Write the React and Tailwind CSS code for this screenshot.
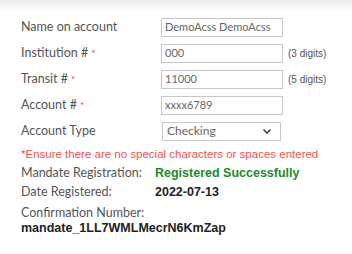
import React from 'react';

const lato = { fontFamily: 'Lato, "Open Sans", sans-serif' };

function Field({ label, required, value, hint }) {
  return (
    <div className="flex h-[26px] items-center">
      <div className="w-[140px] text-[12.5px] text-[#555]" style={lato}>
        {label}
        {required && <span className="ml-[3px] text-[10px] text-[#e44]">*</span>}
      </div>
      <div className="flex h-[19px] w-[122px] items-center border border-[#c8c8c8] bg-white px-[3px] text-[11px] text-[#666]" style={lato}>
        {value}
      </div>
      {hint && (
        <span className="ml-[5px] font-['Liberation_Sans',Arial,sans-serif] text-[10px] text-[#555]">{hint}</span>
      )}
    </div>
  );
}

export default function App() {
  return (
    <div className="h-[254px] w-[352px] overflow-hidden bg-white">
      <div className="h-[12px] bg-gradient-to-b from-[#ececec] to-white" />
      <div className="pl-[21px] pt-[2px]">
        <Field label="Name on account" value="DemoAcss DemoAcss" />
        <Field label="Institution #" required value="000" hint="(3 digits)" />
        <Field label="Transit #" required value="11000" hint="(5 digits)" />
        <Field label="Account #" required value="xxxx6789" />
        <div className="flex h-[26px] items-center">
          <div className="w-[141px] text-[12.5px] text-[#555]" style={lato}>Account Type</div>
          <div className="flex h-[19px] w-[119px] items-center justify-between border border-[#c8c8c8] bg-white pl-[4px] pr-[8px] text-[12px] text-[#666]" style={lato}>
            <span>Checking</span>
            <svg width="10" height="7" viewBox="0 0 10 7" fill="none">
              <path d="M1.5 1.5 L5 5 L8.5 1.5" stroke="#444" strokeWidth="1.6" />
            </svg>
          </div>
        </div>
        <div className="h-[20px] font-['Liberation_Sans',Arial,sans-serif] text-[11.5px] leading-[20px] text-[#f0524f]">
          *Ensure there are no special characters or spaces entered
        </div>
        <div className="flex h-[19px] items-center">
          <div className="w-[134px] text-[12.5px] text-[#555]" style={lato}>Mandate Registration:</div>
          <div className="font-['Liberation_Sans',Arial,sans-serif] text-[12.5px] font-bold text-[#1e8a2a]">Registered Successfully</div>
        </div>
        <div className="flex h-[19px] items-center">
          <div className="w-[134px] text-[12.5px] text-[#555]" style={lato}>Date Registered:</div>
          <div className="font-['Liberation_Sans',Arial,sans-serif] text-[12.5px] font-bold text-[#222]">2022-07-13</div>
        </div>
        <div className="mt-[2px] h-[17px] text-[12.5px] leading-[17px] text-[#555]" style={lato}>Confirmation Number:</div>
        <div className="h-[15px] font-['Liberation_Sans',Arial,sans-serif] text-[12.5px] font-bold leading-[15px] text-[#222]">
          mandate_1LL7WMLMecrN6KmZap
        </div>
      </div>
    </div>
  );
}
